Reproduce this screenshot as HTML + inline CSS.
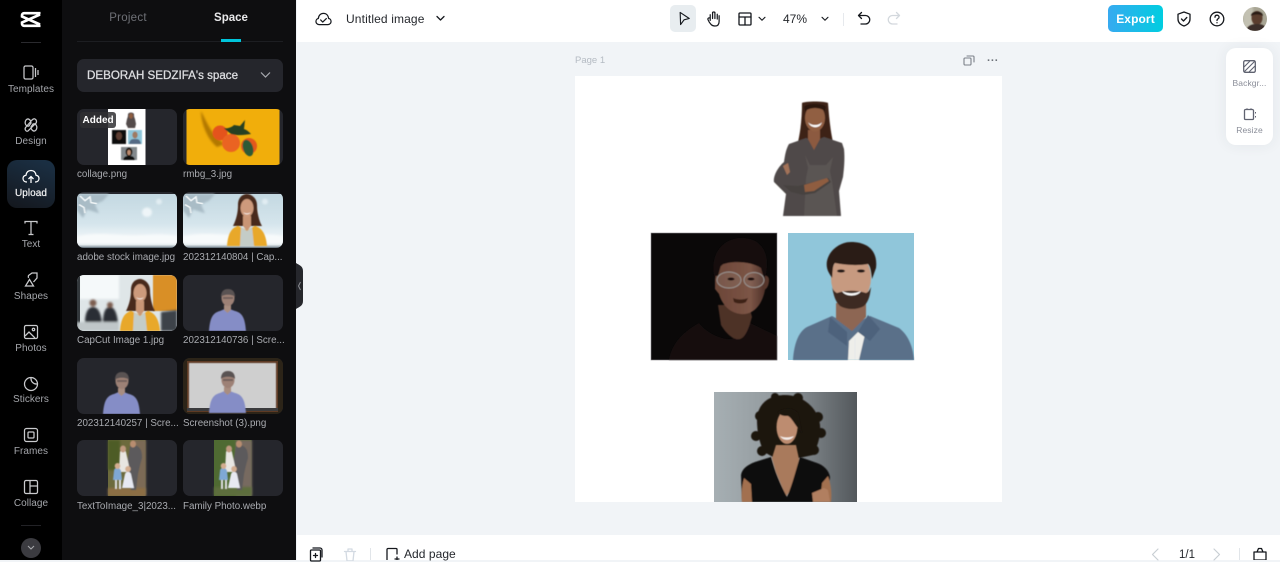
<!DOCTYPE html>
<html lang="en">
<head>
<meta charset="utf-8">
<title>Untitled image</title>
<style>
*{box-sizing:border-box}
html,body{margin:0;padding:0;width:1280px;height:560px;overflow:hidden;background:#f1f4f7;font-family:"Liberation Sans",sans-serif}
.a{position:absolute}
#rail{left:0;top:0;width:62px;height:560px;background:#000}
#panel{left:62px;top:0;width:234px;height:560px;background:#0e0e10}
.ri{position:absolute;left:0;width:62px;text-align:center;font-size:10px;color:#a4a6ab;line-height:12px;letter-spacing:.05px}
.ri span{position:absolute;left:0;width:62px;top:20px}
.ri svg{position:absolute;left:22px;top:0;width:18px;height:18px;fill:none;stroke:#c9cacd;stroke-width:1.250}
.th{position:absolute;width:100px;height:56px;background:#25262c;border-radius:7px;overflow:hidden}
.th svg{position:absolute;left:0;top:0;width:100px;height:56px}
.lb{position:absolute;font-size:9.800px;line-height:12px;color:#a9abb0;white-space:nowrap;width:102px;overflow:hidden}
.t{position:absolute;white-space:nowrap}
.ic{position:absolute;fill:none;stroke:#15181d;stroke-width:1.300;stroke-linecap:round;stroke-linejoin:round}
</style>
</head>
<body>
<svg width="0" height="0" style="position:absolute">
<defs>
<filter id="b" x="-10%" y="-10%" width="120%" height="120%"><feGaussianBlur stdDeviation=".4"/></filter>
<filter id="c" x="-20%" y="-20%" width="140%" height="140%"><feGaussianBlur stdDeviation="1"/></filter>
<linearGradient id="snow" x1="0" y1="0" x2="0" y2="1"><stop offset="0" stop-color="#c3d8e1"/><stop offset=".55" stop-color="#d5e5ec"/><stop offset=".82" stop-color="#eff5f8"/><stop offset=".94" stop-color="#e5ecef"/><stop offset="1" stop-color="#7d8d98"/></linearGradient>
<linearGradient id="gray" x1="0" y1="0" x2="1" y2="0"><stop offset="0" stop-color="#a6afb3"/><stop offset=".5" stop-color="#8f969a"/><stop offset="1" stop-color="#53585c"/></linearGradient>
<linearGradient id="face1" x1="0" y1="0" x2="1" y2="0"><stop offset="0" stop-color="#6b4537"/><stop offset=".7" stop-color="#7c5546"/><stop offset="1" stop-color="#4a2e26"/></linearGradient>
<g id="man" filter="url(#b)">
<path d="M1 56C2 44 4 38 12 36L19 33 27 36C35 38 37 44 38 56Z" fill="#858dc6"/>
<path d="M16 30h7v5l-3.500 3-3.500-3Z" fill="#a88d80"/>
<ellipse cx="20" cy="23" rx="6.500" ry="8" fill="#9d8176"/>
<path d="M13 22c0-6 3-8 7-8s7 2 7 8c-2-3-12-3-14 0Z" fill="#5a5252"/>
<rect x="15" y="22" width="10" height="2" fill="#4a4242" opacity=".5"/>
</g>
<g id="snowbg">
<rect width="100" height="56" fill="url(#snow)"/>
<circle cx="70" cy="19" r="5" fill="#f2f8fa" opacity=".9" filter="url(#c)"/>
<circle cx="82" cy="8" r="3" fill="#eef6f9" opacity=".7" filter="url(#c)"/>
<path d="M0 0h32L26 7 18 11 22 20 10 16 6 25 0 17Z" fill="#a9bcc6" filter="url(#c)"/>
<path d="M3 2l5 5 5-4 1 6 6 1M2 11l5 3 1 6" stroke="#eff4f6" stroke-width="1.600" fill="none" filter="url(#b)"/>
<path d="M0 44c20-4 30-2 50-1s30-3 50 1v8H0Z" fill="#f7fafb" filter="url(#c)"/>
</g>
<g id="yw" filter="url(#b)">
<path d="M43 11c0-8 5-11 9-11s10 4 10 11 2 16 5 21H38c3-6 5-13 5-21Z" fill="#4a2c1d"/>
<path d="M32 52c1-12 4-18 11-20l9 4 8-4c7 2 11 8 12 20Z" fill="#e8a82a"/>
<path d="M46 33l6 4 5-4 2 19H45Z" fill="#c4ccc7"/>
<path d="M48 22h8v10l-4 5-4-5Z" fill="#c99574"/>
<ellipse cx="52" cy="14" rx="6.500" ry="9" fill="#cd9a7b"/>
<path d="M48 18c2 2 6 2 8 0-2 3-6 3-8 0Z" fill="#fff"/>
</g>
<g id="fam" filter="url(#b)">
<path d="M22 6c2-2 5-2 7 0 4 2 5 6 5 12l-2 7-2 9-2 16h-5l-1-14-3-12Z" fill="#5c5a5c"/>
<ellipse cx="25" cy="4" rx="3" ry="3.500" fill="#b88d70"/>
<path d="M12 12c1-3 5-3 6 0l3 14-2 6H11Z" fill="#e8e6e2"/>
<ellipse cx="15" cy="9" rx="3" ry="3.500" fill="#c09a80"/>
<path d="M6 31c0-4 6-4 7 0l1 9H5Z" fill="#7fa8d4"/>
<ellipse cx="9.500" cy="26" rx="2.800" ry="3" fill="#d3ad90"/>
<path d="M7 40h2v9H7ZM11 40h2v9h-2Z" fill="#dfdfe3"/>
<path d="M17 34c1-3 5-3 6 0l3 14H14Z" fill="#e7e9f2"/>
<ellipse cx="20" cy="29" rx="2.800" ry="3" fill="#d3ad90"/>
</g>
</defs>
</svg>

<!-- CANVAS -->
<div class="a" style="left:575px;top:76px;width:427px;height:426px;background:#fff"></div>
<svg class="a" style="left:575px;top:76px" width="427" height="426" viewBox="575 76 427 426">
<!-- top woman -->
<g filter="url(#b)">
<path d="M802 103c3-2 23-2 26 0 1 12 2 26 5 39h-35c3-13 4-27 4-39Z" fill="#3d2419"/>
<path d="M789 144l17-6 9 3 9-4 18 6 2 6c1 10 0 20-1 28l-4 14 2 25h-58l3-22-12-12c-1-6 4-15 10-20 1-7 2-13 5-18Z" fill="#504a49"/>
<path d="M805 155l3 13-2 10-2 38h33l-5-35 -2-10 3-14-7 8h-16Z" fill="#5a5452"/>
<path d="M798 186l8-2 22-6 3 4-16 11-12 2-12-3-8-7Z" fill="#474241"/>
<path d="M804 185l23-7 2 3-15 10-9 1Z" fill="#8f5d40"/>
<path d="M783 166l5-3 2 9-3 3Z" fill="#a27258"/>
<path d="M808 130h12v9l-6 11-6-11Z" fill="#8c5a3f"/>
<ellipse cx="815" cy="118" rx="10" ry="13.500" fill="#915f43"/>
<path d="M808 122c3 4 11 4 14 0-2 7-11 7-14 0Z" fill="#fff"/>
<path d="M804 107c2-4 20-4 22 0l-1 4c-6-4-14-4-20 0Z" fill="#2a1810"/>
</g>
<!-- black photo -->
<rect x="651" y="233" width="126" height="127" fill="#0a0808"/>
<g filter="url(#b)">
<path d="M669 360c3-17 14-28 30-37 6 8 20 17 33 16 8-2 12-8 16-17l29 14v24Z" fill="#131010"/>
<path d="M718 305l31 0 3 12c-3 10-6 20-12 22-7 2-15-7-19-14Z" fill="#4d3127"/>
<path d="M715 282c0-14 8-22 25-22 15 0 26 8 26 20 0 14-6 32-21 34-14 1-23-9-26-20l-4-5Z" fill="url(#face1)"/>
<path d="M714 276c-4-24 10-38 28-38 14 0 24 8 25 24 0 7-1 14-2 20l-4-14c-9-6-28-8-40-3l-3 11Z" fill="#120d0d"/>
<path d="M765 276c2-1 4 1 4 4 0 5-2 9-5 10Z" fill="#55362b"/>
<ellipse cx="729" cy="280" rx="12" ry="8" fill="#9a8a85" fill-opacity=".25" stroke="#99928e" stroke-width="1"/>
<ellipse cx="754" cy="280" rx="10" ry="7.500" fill="#9a8a85" fill-opacity=".2" stroke="#99928e" stroke-width="1"/>
<ellipse cx="731" cy="279" rx="3.500" ry="1.500" fill="#1a0f0d"/>
<ellipse cx="751" cy="279" rx="3.500" ry="1.500" fill="#1a0f0d"/>
<path d="M733 298c4 2 11 2 15 0l-2 4c-3 2-9 2-12 0Z" fill="#3d2019"/>
</g>
<rect x="651" y="233" width="126" height="127" fill="none" stroke="#8a888c" stroke-width=".6"/>
<!-- blue photo -->
<rect x="788" y="233" width="126" height="127" fill="#90c6da"/>
<g filter="url(#b)">
<path d="M793 360c1-15 5-28 14-33l25-11 19 10 19-10 29 12c8 6 14 17 15 32Z" fill="#5a7089"/>
<path d="M836 303h30v14l-14 14-16-12Z" fill="#8d6653"/>
<path d="M849 341l9-9 9-6-8 34h-11Z" fill="#eeeeea"/>
<path d="M830 317l17 15v14l-19-14ZM868 315l-10 17 12 9 10-12Z" fill="#4d627c"/>
<path d="M855 360v-22" stroke="#e4e7ea" stroke-width="1"/>
<ellipse cx="851" cy="278" rx="20" ry="26" fill="#c79a80"/>
<path d="M832 287c2 9 3 14 8 19 7 4 17 4 24 0 5-5 6-11 7-19-1 2-2 5-5 6-9-3-20-3-29 0-2-1-4-3-5-6Z" fill="#3c2a23"/>
<path d="M842 291c6 3 13 3 19 0-3 6-16 6-19 0Z" fill="#fff"/>
<path d="M829 273c-8-14 6-31 22-31 17 0 27 9 25 26l-4 11c-1-6-1-12-4-15-11 2-23 1-33-1-3 3-2 10-3 15Z" fill="#2b1d18"/>
<ellipse cx="841" cy="271" rx="4" ry="1.600" fill="#241714"/>
<ellipse cx="861" cy="271" rx="4" ry="1.600" fill="#241714"/>
</g>
<!-- curly photo -->
<rect x="714" y="392" width="143" height="110" fill="url(#gray)"/>
<g filter="url(#b)" fill="#1b1311">
<path d="M757 420c0-16 12-25 28-25 18 0 33 13 35 30 1 12-3 22-7 30l-14 3-26-1-9-5c-5-10-7-21-7-32Z"/>
<circle cx="760" cy="416" r="5"/><circle cx="756" cy="436" r="5"/><circle cx="762" cy="451" r="5"/><circle cx="818" cy="417" r="5"/><circle cx="821" cy="433" r="5"/><circle cx="814" cy="450" r="5"/><circle cx="775" cy="397" r="4"/><circle cx="798" cy="398" r="5"/>
</g>
<g filter="url(#b)">
<path d="M776 445h20l3 14 -6 28-7 9-10-24-4-14Z" fill="#a97a5c"/>
<path d="M742 502l-1-27c1-6 6-10 14-13l16-5c4 15 9 27 16 40 6-14 9-28 13-40l17 6c6 2 12 7 13 14l-3 25Z" fill="#0e0c0d"/>
<path d="M744 478l7 6 1 18h-10c-1-8 0-17 2-24ZM828 476l-6 7-2 19h11c1-9 0-18-3-26Z" fill="#a2704f"/>
<path d="M812 493l12-5 4 2 2 12h-17Z" fill="#b17f60"/>
<ellipse cx="787" cy="427" rx="10.500" ry="17" fill="#bd8c70"/>
<path d="M780 436c3 2 10 2 14 0-3 5-11 5-14 0Z" fill="#f5efec"/>
<path d="M778 412c6-4 14-5 20 1l4 20c-6-6-10-15-14-17-4 0-8 0-10-4Z" fill="#1b1311"/>
</g>
</svg>

<!-- top bar -->
<div class="a" style="left:297px;top:0;width:983px;height:42px;background:#fff"></div>
<svg class="ic" style="left:315px;top:11px" width="17" height="16" viewBox="0 0 18 16"><path d="M4.500 14C2 14 1 12 1 10.500S2.200 7.700 3.500 7.500C3.800 4 6.200 2 9 2s5 2 5.500 5.500c1.500.2 2.500 1.500 2.500 3s-1 3.500-3.500 3.500ZM6 9l2.200 2.300L12 7.500"/></svg>
<div class="t" style="left:346px;top:12px;font-size:12px;line-height:15px;color:#24272c;letter-spacing:.13px">Untitled image</div>
<svg class="ic" style="left:436px;top:15px" width="9" height="7" viewBox="0 0 9 7"><path d="M1 1.500l3.500 3.500L8 1.500"/></svg>

<div class="a" style="left:670px;top:5px;width:26px;height:27px;background:#e8edf0;border-radius:5px"></div>
<svg class="ic" style="left:678px;top:10px" width="13" height="17" viewBox="0 0 15 17"><path d="M2.500 1.500L13 8.500l-6 1.500L3 15.500Z"/></svg>
<svg class="ic" style="left:706px;top:10px" width="15" height="17" viewBox="0 0 16 18" stroke-width="1.200"><path d="M4.500 11V5M7 9V2.500M9.500 9V2.500M12 9.500V4.500M4.500 8.500C3 8 1.800 8.500 2 10c.8 2 2 4 3.500 5.500 1 1 2.500 1.500 4 1.500 3 0 4.500-2 4.500-5V6M7 3.500c0-2 2.500-2 2.500 0"/></svg>
<svg class="ic" style="left:738px;top:12px" width="14" height="14" viewBox="0 0 14 14"><rect x="1" y="1" width="12" height="12" rx="1"/><path d="M1 5h12M7 5v8"/></svg>
<svg class="ic" style="left:758px;top:16px" width="8" height="6" viewBox="0 0 9 7"><path d="M1 1.500l3.500 3.500L8 1.500"/></svg>
<div class="t" style="left:783px;top:12px;font-size:12px;line-height:15px;color:#24272c">47%</div>
<svg class="ic" style="left:821px;top:16px" width="8" height="6" viewBox="0 0 9 7"><path d="M1 1.500l3.500 3.500L8 1.500"/></svg>
<div class="a" style="left:843px;top:13px;width:1px;height:13px;background:#e6e9ed"></div>
<svg class="ic" style="left:857px;top:11px" width="14" height="15" viewBox="0 0 14 15"><path d="M4.500 1.500L1.500 4.500l3 3M2 4.500h6.500a4 4 0 0 1 0 8.500H4"/></svg>
<svg class="ic" style="left:887px;top:11px;stroke:#d3d8dd" width="14" height="15" viewBox="0 0 14 15"><path d="M9.500 1.500l3 3-3 3M12 4.500H5.500a4 4 0 0 0 0 8.500H10"/></svg>

<div class="a" style="left:1108px;top:5px;width:55px;height:27px;border-radius:5px;background:linear-gradient(90deg,#37aaf0,#00cde0)"></div>
<div class="t" style="left:1108px;top:11.500px;width:55px;text-align:center;font-size:12px;line-height:15px;font-weight:bold;color:#fff;letter-spacing:.1px">Export</div>
<svg class="ic" style="left:1176px;top:11px" width="16" height="16" viewBox="0 0 16 16"><path d="M8 1l6 2.200V8c0 3.500-2.500 5.800-6 7-3.500-1.200-6-3.500-6-7V3.200ZM5.500 8l2 2L10.800 6.500"/></svg>
<svg class="ic" style="left:1209px;top:11px" width="16" height="16" viewBox="0 0 16 16"><circle cx="8" cy="8" r="6.800"/><path d="M6 6.200C6 4.800 7 4.200 8 4.200s2.100.7 2.100 1.900c0 1.700-2.100 1.700-2.100 3.400M8 11.600v.2"/></svg>
<svg class="a" style="left:1243px;top:7px" width="24" height="24" viewBox="0 0 24 24"><defs><clipPath id="av"><circle cx="12" cy="12" r="12"/></clipPath></defs><g clip-path="url(#av)"><rect width="24" height="24" fill="#a8a594"/><rect x="0" y="0" width="10" height="24" fill="#c3c1b2" filter="url(#c)"/><g filter="url(#b)"><ellipse cx="14" cy="11" rx="5.500" ry="7" fill="#5a3d2e"/><path d="M8 9c0-6 12-6 12 0-3-2-9-2-12 0Z" fill="#2b1e19"/><path d="M3 24c1-5 5-7 11-7s9 2 10 7Z" fill="#3a2f2a"/></g></g></svg>

<!-- right tool panel -->
<div class="a" style="left:1226px;top:48px;width:47px;height:97px;background:#fff;border-radius:10px;box-shadow:0 0 14px rgba(40,50,70,.07)"></div>
<svg class="a" style="left:1243px;top:60px" width="13" height="13" viewBox="0 0 13 13" fill="none" stroke="#5f6270" stroke-width="1.300"><rect x=".7" y=".7" width="11.600" height="11.600" rx="1.500"/><path d="M1 7l6-6M1 12l11-11M6 12l6-6" stroke-width="1.100"/></svg>
<div class="t" style="left:1226px;top:78px;width:47px;text-align:center;font-size:8.500px;line-height:11px;color:#8a8d98;letter-spacing:.1px">Backgr...</div>
<svg class="a" style="left:1243px;top:108px" width="13" height="13" viewBox="0 0 13 13" fill="none" stroke="#5f6270" stroke-width="1.300"><path d="M2.500 1.500h7a1.200 1.200 0 0 1 1 1v8a1 1 0 0 1-1 1h-7a1 1 0 0 1-1-1v-8a1 1 0 0 1 1-1Z"/><path d="M4 .2v1M8 .2v1M12.500 4v1.500M12.500 8v1.500" stroke-width="1"/></svg>
<div class="t" style="left:1226px;top:125px;width:47px;text-align:center;font-size:8.500px;line-height:11px;color:#8a8d98;letter-spacing:.1px">Resize</div>

<!-- page header -->
<div class="t" style="left:575px;top:54.500px;font-size:9.500px;line-height:12px;color:#b5bbc3">Page 1</div>
<svg class="ic" style="left:963px;top:55px;stroke:#7b8088;stroke-width:1.100" width="12" height="11" viewBox="0 0 12 11"><rect x="1" y="3" width="7" height="7" rx="1"/><path d="M4 1h6a1 1 0 0 1 1 1v5"/></svg>
<div class="t" style="left:987px;top:54.500px;font-size:11px;line-height:12px;font-weight:bold;color:#6d7279;letter-spacing:.2px">···</div>

<!-- bottom bar -->
<div class="a" style="left:297px;top:535px;width:983px;height:25px;background:#fff"></div>
<svg class="ic" style="left:309px;top:547px;stroke-width:1.300" width="14" height="15" viewBox="0 0 14 15"><rect x="1.500" y="3" width="10" height="11" rx="1"/><path d="M4 1h7a2 2 0 0 1 2 2v7M6.500 6.500v4M4.500 8.500h4"/></svg>
<svg class="ic" style="left:343px;top:548px;stroke:#d3dae2;stroke-width:1.300" width="14" height="13" viewBox="0 0 14 13"><path d="M1.500 3.500h11M5 3V1h4v2M3 3.500l1 9.500h6l1-9.500"/></svg>
<div class="a" style="left:370px;top:548px;width:1px;height:12px;background:#e1e5e9"></div>
<svg class="ic" style="left:385px;top:547px;stroke-width:1.300" width="15" height="13" viewBox="0 0 15 13"><path d="M12 7V2.500a1 1 0 0 0-1-1H3a1 1 0 0 0-1 1V13M12 10v3M10 12h4"/></svg>
<div class="t" style="left:404px;top:547px;font-size:12px;line-height:15px;color:#24272c;letter-spacing:.05px">Add page</div>
<svg class="ic" style="left:1151px;top:548px;stroke:#c9ced4;stroke-width:1.200" width="9" height="13" viewBox="0 0 9 13"><path d="M7 1L1.500 6.500 7 12"/></svg>
<div class="t" style="left:1179px;top:548px;font-size:11.500px;line-height:14px;color:#24272c">1/1</div>
<svg class="ic" style="left:1212px;top:548px;stroke:#c9ced4;stroke-width:1.200" width="9" height="13" viewBox="0 0 9 13"><path d="M2 1l5.500 5.500L2 12"/></svg>
<div class="a" style="left:1239px;top:548px;width:1px;height:12px;background:#e1e5e9"></div>
<svg class="ic" style="left:1253px;top:547px;stroke-width:1.300" width="14" height="13" viewBox="0 0 14 13"><path d="M1 5h12v8H1ZM4 5l1.500-3.500h3L10 5"/></svg>

<!-- collapse handle -->
<svg class="a" style="left:296px;top:263px" width="8" height="46" viewBox="0 0 8 46"><path d="M0 0c3 2 7 3 7 8v30c0 5-4 6-7 8Z" fill="#26272c"/><path d="M4.500 19L2.500 23l2 4" fill="none" stroke="#8b8d92" stroke-width="1"/></svg>

<!-- PANEL -->
<div id="panel" class="a"></div>
<div class="t" style="left:62px;top:10.500px;width:132px;text-align:center;font-size:11.500px;line-height:14px;color:#6f7177;letter-spacing:.25px">Project</div>
<div class="t" style="left:165px;top:10.500px;width:132px;text-align:center;font-size:11.500px;line-height:14px;font-weight:bold;color:#e9e9eb">Space</div>
<div class="a" style="left:77px;top:41px;width:206px;height:1px;background:#1d1e22"></div>
<div class="a" style="left:221px;top:39px;width:20px;height:2.500px;background:#00c4da"></div>
<div class="a" style="left:77px;top:59px;width:206px;height:33px;background:#25262c;border-radius:7px"></div>
<div class="t" style="left:87px;top:68px;font-size:11.600px;line-height:15px;color:#dcdde0;-webkit-text-stroke:.3px #dcdde0">DEBORAH SEDZIFA's space</div>
<svg class="a" style="left:260px;top:71px" width="11" height="8" viewBox="0 0 11 8" fill="none" stroke="#a9abb0" stroke-width="1.200"><path d="M1 1.500l4.500 4.500L10 1.500"/></svg>

<!-- thumbs row 1 -->
<div class="th" style="left:77px;top:109px"><svg viewBox="0 0 100 56">
<rect x="31" y="0" width="37.500" height="56" fill="#fff"/>
<g filter="url(#b)"><rect x="35" y="21" width="14" height="14" fill="#0b0909"/><ellipse cx="42" cy="27" rx="3" ry="4" fill="#5c3d30"/><rect x="51" y="21" width="14" height="14" fill="#8fc6da"/><ellipse cx="58" cy="26" rx="2.700" ry="3.500" fill="#9f7a62"/><path d="M52 35c1-5 3-5 6-5s5 0 6 5Z" fill="#546a85"/><path d="M50 10c1-2 1-4 1-5 1-2 5-2 6 0 0 2 0 3 1 5l1 5-1 4h-7l-2-4Z" fill="#524c4b"/><ellipse cx="54" cy="7" rx="2" ry="2.800" fill="#8f5d40"/><rect x="44" y="38" width="16" height="13" fill="#83898d"/><path d="M46 51c1-4 3-4 6-4s5 0 6 4Z" fill="#0e0c0d"/><ellipse cx="52" cy="43" rx="3.500" ry="4.500" fill="#1b1311"/><ellipse cx="52" cy="43.500" rx="1.800" ry="2.800" fill="#bd8c70"/></g>
</svg></div>
<div class="a" style="left:80px;top:112px;width:36px;height:16px;border-radius:3px;background:rgba(48,48,50,.85)"></div>
<div class="t" style="left:82.500px;top:114.500px;font-size:10px;line-height:12px;font-weight:bold;color:#fff">Added</div>
<div class="lb" style="left:77px;top:169px">collage.png</div>

<div class="th" style="left:183px;top:109px"><svg viewBox="0 0 100 56">
<rect x="3.500" y="0" width="93" height="56" fill="#f1ae0b"/>
<path d="M18 2c6 12 12 26 24 33l-8 3C24 30 18 14 18 2Z" fill="#b27806" filter="url(#c)"/>
<g filter="url(#b)"><circle cx="37" cy="24" r="7.500" fill="#e4531c"/><circle cx="48" cy="34" r="9" fill="#ea6420"/><circle cx="66" cy="37" r="8" fill="#e4581d"/><path d="M41 19c4 1 8-1 10-3l6 1 5-6-1 9c3 1 5 3 7 5-7 1-13 2-20 0-3-3-5-3-7-6Z" fill="#263f22"/><ellipse cx="65" cy="39" rx="5" ry="8.500" fill="#2f5a34" transform="rotate(-18 65 39)"/></g>
</svg></div>
<div class="lb" style="left:183px;top:169px">rmbg_3.jpg</div>

<!-- row 2 -->
<div class="th" style="left:77px;top:192px"><svg viewBox="0 0 100 56"><g transform="translate(0 2) scale(1 .96)"><use href="#snowbg"/></g></svg></div>
<div class="lb" style="left:77px;top:252px">adobe stock image.jpg</div>
<div class="th" style="left:183px;top:192px"><svg viewBox="0 0 100 56"><g transform="translate(0 2) scale(1 .96)"><use href="#snowbg"/></g><use href="#yw" transform="translate(12 2)"/></svg></div>
<div class="lb" style="left:183px;top:252px">202312140804 | Cap...</div>

<!-- row 3 -->
<div class="th" style="left:77px;top:275px"><svg viewBox="0 0 100 56">
<rect width="100" height="56" fill="#dfe6e8"/><rect x="76" y="0" width="24" height="36" fill="#d98f25" filter="url(#b)"/><rect x="2" y="0" width="40" height="24" fill="#f5f9fa" filter="url(#c)"/><rect x="0" y="0" width="3" height="56" fill="#33383c"/>
<g filter="url(#c)"><path d="M8 48c0-12 4-16 8-16s8 4 9 16ZM26 48c0-12 3-16 7-16s7 5 8 16Z" fill="#2b2e36"/><circle cx="16" cy="28" r="3.500" fill="#7b5d50"/><circle cx="33" cy="30" r="3" fill="#7b5d50"/><path d="M84 56V37l16-2v21Z" fill="#3d4348"/><rect y="47" width="42" height="9" fill="#c0c7c9"/></g>
<use href="#yw" transform="translate(11 4)"/>
</svg></div>
<div class="lb" style="left:77px;top:335px">CapCut Image 1.jpg</div>
<div class="th" style="left:183px;top:275px"><svg viewBox="0 0 100 56"><use href="#man" transform="translate(25 0)"/></svg></div>
<div class="lb" style="left:183px;top:335px">202312140736 | Scre...</div>

<!-- row 4 -->
<div class="th" style="left:77px;top:358px"><svg viewBox="0 0 100 56"><use href="#man" transform="translate(25 0)"/></svg></div>
<div class="lb" style="left:77px;top:418px">202312140257 | Scre...</div>
<div class="th" style="left:183px;top:358px"><svg viewBox="0 0 100 56"><rect width="100" height="56" fill="#2c2418"/><rect x="4" y="3" width="91" height="51" fill="#5e3a24"/><rect x="6" y="5" width="87" height="46" fill="#cfcfcf" filter="url(#b)"/><rect x="4" y="50" width="91" height="3" fill="#3b3b3d"/><use href="#man" transform="translate(25 -1)"/></svg></div>
<div class="lb" style="left:183px;top:418px">Screenshot (3).png</div>

<!-- row 5 -->
<div class="th" style="left:77px;top:440px"><svg viewBox="0 0 100 56"><g transform="translate(31 0)"><rect width="37.500" height="56" fill="#6c6a3d"/><rect x="24" width="14" height="56" fill="#7b6a56" filter="url(#c)"/><rect width="12" height="30" fill="#4e5c26" filter="url(#c)"/><rect y="48" width="37.500" height="8" fill="#8c6e44" filter="url(#c)"/><use href="#fam"/></g></svg></div>
<div class="lb" style="left:77px;top:501px">TextToImage_3|2023...</div>
<div class="th" style="left:183px;top:440px"><svg viewBox="0 0 100 56"><g transform="translate(31 0)"><rect width="37.500" height="56" fill="#4f6a32"/><rect x="22" width="16" height="56" fill="#776b60" filter="url(#c)"/><rect y="47" width="37.500" height="9" fill="#5d6e3e" filter="url(#c)"/><use href="#fam"/></g></svg></div>
<div class="lb" style="left:183px;top:501px">Family Photo.webp</div>

<!-- RAIL -->
<div id="rail" class="a"></div>
<svg class="a" style="left:20px;top:11px" width="22" height="17" viewBox="0 0 22 17" fill="none" stroke="#fff" stroke-width="2.600"><path d="M20.500 2.200H4a2 2 0 0 0-2 2v1.300L20 13.500M20.500 14.800H4a2 2 0 0 1-2-2v-1.300L20 3.500"/></svg>
<div class="a" style="left:21px;top:42px;width:20px;height:1px;background:#2a2a2e"></div>

<div class="ri" style="top:64px;height:32px"><svg viewBox="0 0 18 18"><rect x="2" y="2" width="9" height="13" rx="1.500"/><path d="M13.500 4v9M16 6v5"/></svg><span>Templates</span></div>
<div class="ri" style="top:116px;height:32px"><svg viewBox="0 0 18 18"><path d="M4 4c2-2.500 5 0 5 3L7 10c-3 1-5-3-3-6ZM14 14c-2 2.500-5 0-5-3l2-3c3-1 5 3 3 6ZM13 3c2 1 2 4 0 5l-7 7c-2 1-4-2-2-4l6-7c1-1 2-1.500 3-1Z"/></svg><span>Design</span></div>
<div class="a" style="left:7px;top:160px;width:48px;height:48px;border-radius:10px;background:linear-gradient(20deg,#14171d,#1b3146)"></div>
<div class="ri" style="top:168px;height:32px;color:#f3f3f4;-webkit-text-stroke:.2px #f3f3f4"><svg style="stroke:#fff" viewBox="0 0 18 18"><path d="M5 14c-2.500 0-4-1.500-4-3.500S2.300 7.500 4 7.200C4.500 4 6.500 2.500 9 2.500s4.500 1.500 5 4.700c1.700.3 3 1.300 3 3.300S15.500 14 13 14M9 15V9M6.500 11L9 8.500l2.500 2.500"/></svg><span>Upload</span></div>
<div class="ri" style="top:219px;height:32px"><svg viewBox="0 0 18 18"><path d="M3 4.500V2.500h12v2M9 2.500v13M6.500 15.500h5"/></svg><span>Text</span></div>
<div class="ri" style="top:271px;height:32px"><svg viewBox="0 0 18 18"><path d="M7.500 8.500L3.500 15h8ZM6.500 7a3.500 3.500 0 0 1 0-2.500L10 2h5v5l-3.500 4"/></svg><span>Shapes</span></div>
<div class="ri" style="top:323px;height:32px"><svg viewBox="0 0 18 18"><rect x="2.500" y="2.500" width="13" height="13" rx="1.500"/><circle cx="11.500" cy="6.500" r="1.200"/><path d="M3 13l4-4 6 6"/></svg><span>Photos</span></div>
<div class="ri" style="top:375px;height:32px"><svg viewBox="0 0 18 18"><path d="M9 2.500a6.500 6.500 0 1 0 6.500 6.500C11.500 9.500 8.500 6.500 9 2.500ZM9 2.500c3.500 0 6.500 3 6.500 6.500"/></svg><span style="top:19px">Stickers</span></div>
<div class="ri" style="top:426px;height:32px"><svg viewBox="0 0 18 18"><rect x="2.500" y="2.500" width="13" height="13" rx="2"/><rect x="6" y="6" width="6" height="6" rx="1"/></svg><span>Frames</span></div>
<div class="ri" style="top:478px;height:32px"><svg viewBox="0 0 18 18"><rect x="2.500" y="2.500" width="13" height="13" rx="1.500"/><path d="M8 2.500v13M8 8h7.500"/></svg><span>Collage</span></div>
<div class="a" style="left:21px;top:525px;width:20px;height:1px;background:#222226"></div>
<div class="a" style="left:21px;top:538px;width:20px;height:20px;border-radius:50%;background:#3b3b40"></div>
<svg class="a" style="left:27px;top:545px" width="8" height="6" viewBox="0 0 8 6" fill="none" stroke="#a7a8ac" stroke-width="1.100"><path d="M1 1l3 3 3-3"/></svg>
</body>
</html>
